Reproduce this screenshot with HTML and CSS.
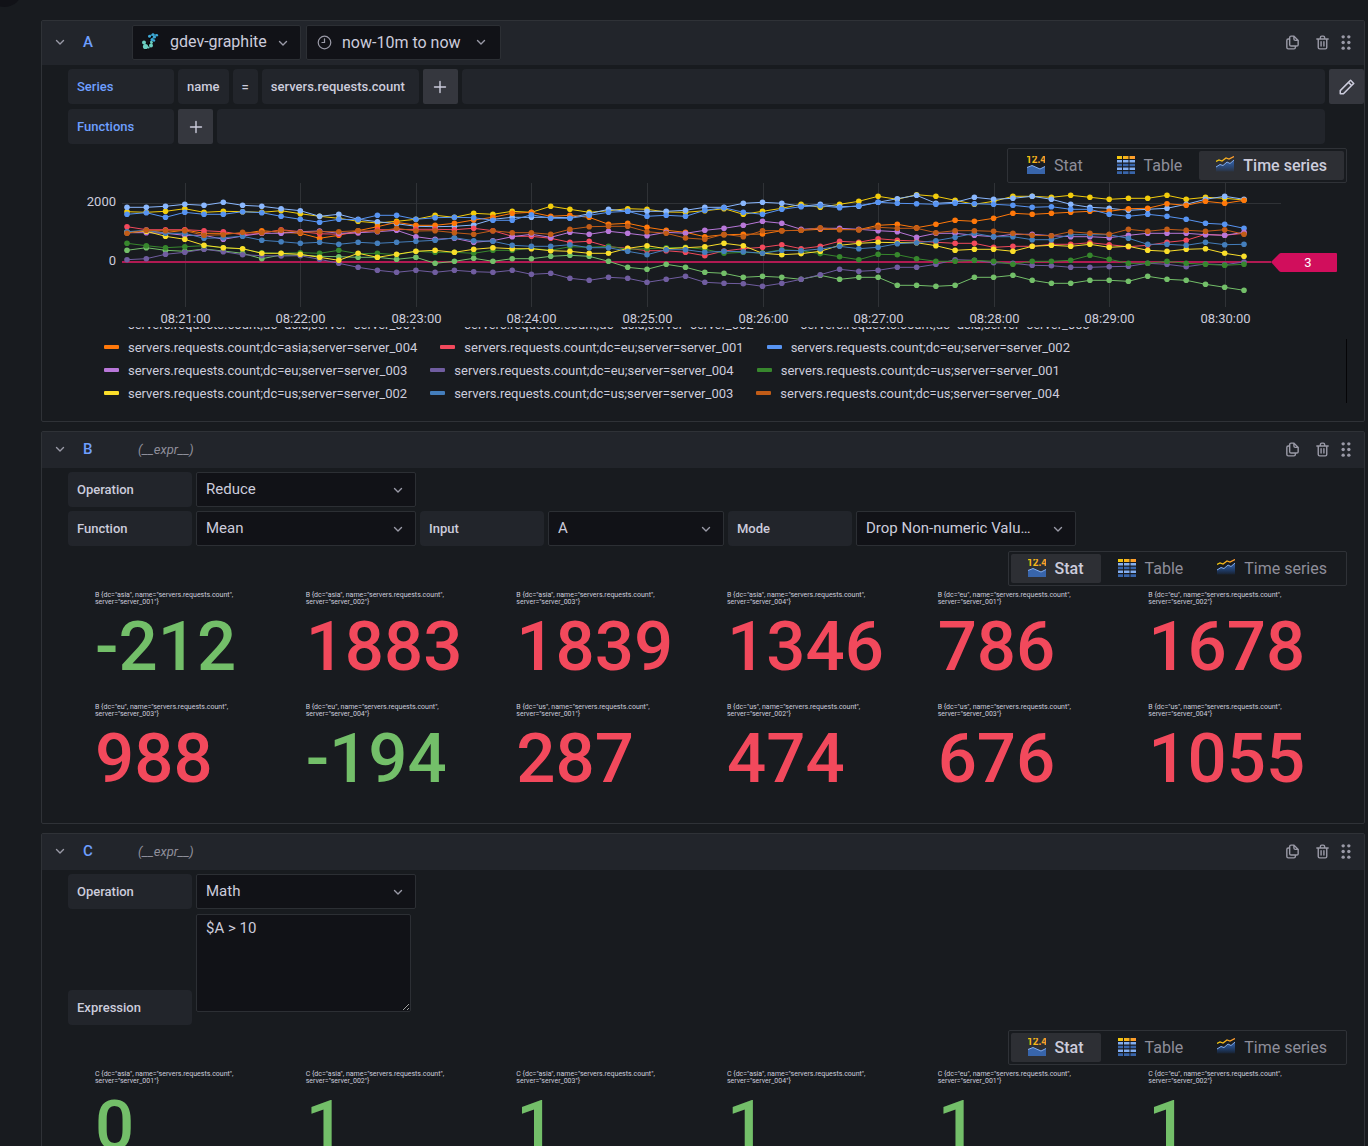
FILE: index.html
```
<!DOCTYPE html>
<html lang="en">
<head>
    <meta charset="utf-8">
    <title>Query editor</title>
    <link rel="stylesheet" href="styles.css">
</head>
<body>
    <svg class="sprite" aria-hidden="true">
        <defs>
            <linearGradient id="warm" x1="0" x2="1" y1="0" y2="0">
                <stop offset="0" stop-color="#f2cc0c"/>
                <stop offset="1" stop-color="#ff9830"/>
            </linearGradient>
            <linearGradient id="cold" x1="0" x2="0" y1="0" y2="1">
                <stop offset="0" stop-color="#3865ab"/>
                <stop offset="1" stop-color="#1f60c4" stop-opacity="0.1"/>
            </linearGradient>
        </defs>
        <symbol id="chevron" viewBox="0 0 12 12">
            <path d="M2.5 4.5 6 8l3.5-3.5" fill="none" stroke="currentColor" stroke-width="1.4" stroke-linecap="round" stroke-linejoin="round"/>
        </symbol>
        <symbol id="copy" viewBox="0 0 24 24">
            <path d="M21 8.94a1.31 1.31 0 0 0-.06-.27v-.09a1.07 1.07 0 0 0-.19-.28l-6-6a1.07 1.07 0 0 0-.28-.19h-.09a.88.88 0 0 0-.33-.11H10a3 3 0 0 0-3 3v1H6a3 3 0 0 0-3 3v10a3 3 0 0 0 3 3h8a3 3 0 0 0 3-3v-1h1a3 3 0 0 0 3-3V9v-.06Zm-6-3.53L17.59 8H16a1 1 0 0 1-1-1ZM15 19a1 1 0 0 1-1 1H6a1 1 0 0 1-1-1V9a1 1 0 0 1 1-1h1v7a3 3 0 0 0 3 3h5Zm4-4a1 1 0 0 1-1 1h-8a1 1 0 0 1-1-1V5a1 1 0 0 1 1-1h3v3a3 3 0 0 0 3 3h3Z" fill="currentColor"/>
        </symbol>
        <symbol id="trash" viewBox="0 0 24 24">
            <path d="M10 18a1 1 0 0 0 1-1v-6a1 1 0 0 0-2 0v6a1 1 0 0 0 1 1ZM20 6h-4V5a3 3 0 0 0-3-3h-2a3 3 0 0 0-3 3v1H4a1 1 0 0 0 0 2h1v11a3 3 0 0 0 3 3h8a3 3 0 0 0 3-3V8h1a1 1 0 0 0 0-2ZM10 5a1 1 0 0 1 1-1h2a1 1 0 0 1 1 1v1h-4Zm7 14a1 1 0 0 1-1 1H8a1 1 0 0 1-1-1V8h10Zm-3-1a1 1 0 0 0 1-1v-6a1 1 0 0 0-2 0v6a1 1 0 0 0 1 1Z" fill="currentColor"/>
        </symbol>
        <symbol id="drag" viewBox="0 0 12 18">
            <g fill="currentColor">
                <circle cx="3" cy="3" r="1.8"/><circle cx="9" cy="3" r="1.8"/>
                <circle cx="3" cy="9" r="1.8"/><circle cx="9" cy="9" r="1.8"/>
                <circle cx="3" cy="15" r="1.8"/><circle cx="9" cy="15" r="1.8"/>
            </g>
        </symbol>
        <symbol id="plus" viewBox="0 0 14 14">
            <path d="M7 1.5v11M1.5 7h11" stroke="currentColor" stroke-width="1.4" stroke-linecap="round"/>
        </symbol>
        <symbol id="pen" viewBox="0 0 24 24">
            <path d="M22 7.24a1 1 0 0 0-.29-.71l-4.24-4.24a1 1 0 0 0-.71-.29 1 1 0 0 0-.71.29l-2.83 2.83L2.29 16.05a1 1 0 0 0-.29.71V21a1 1 0 0 0 1 1h4.24a1 1 0 0 0 .76-.29l10.87-10.93L21.71 8a1.19 1.19 0 0 0 .22-.33 1 1 0 0 0 0-.24.7.7 0 0 0 0-.14ZM6.83 20H4v-2.83l9.93-9.93 2.83 2.83ZM18.17 8.66l-2.83-2.83 1.42-1.41 2.82 2.82Z" fill="currentColor"/>
        </symbol>
        <symbol id="clock" viewBox="0 0 16 16">
            <circle cx="8" cy="8" r="6.7" fill="none" stroke="currentColor" stroke-width="1.3"/>
            <path d="M8 4v4H5.3" fill="none" stroke="currentColor" stroke-width="1.3" stroke-linecap="round"/>
        </symbol>
        <symbol id="graphite" viewBox="0 0 18 18">
            <path d="M3 10 5.5 14.5 9 11.5 11 7M8.5 3 11 6.5 15 2" fill="none" stroke="#050607" stroke-width="4"/>
            <path d="M8 3 11 2 16 2M13 2 11.5 7 9 9M3 10 4.500 14" fill="none" stroke="#2a7f9c" stroke-width="1.4"/>
            <g fill="#6ccfc0">
                <circle cx="3" cy="9.500" r="2"/><circle cx="4.500" cy="13.500" r="2.600"/>
                <circle cx="10" cy="12.500" r="2"/><circle cx="7.500" cy="14.500" r="1.100"/>
                <circle cx="10.500" cy="9.500" r="1.400"/>
            </g>
            <g fill="#3fa9d8">
                <circle cx="8.500" cy="3.200" r="1.500"/><circle cx="12" cy="1.600" r="1.400"/>
                <circle cx="13.500" cy="4" r="1.600"/><circle cx="11" cy="6.500" r="1.500"/>
                <circle cx="15.800" cy="2.200" r="1.300"/><circle cx="13" cy="7.500" r="1.200"/>
            </g>
        </symbol>
        <symbol id="stat" viewBox="0 0 18 18">
            <text x="9" y="7" text-anchor="middle" font-family="Roboto, sans-serif" font-weight="700" font-size="10" fill="url(#warm)">12.4</text>
            <path d="M0 11.500 5 9.500 13 13 18 10.500V18H0Z" fill="#3865ab"/>
            <path d="M0 11.500 5 9.500 13 13 18 10.500" fill="none" stroke="#84aff1"/>
        </symbol>
        <symbol id="table" viewBox="0 0 18 18">
            <path d="M0 0h18v3H0Z" fill="url(#warm)"/>
            <path d="M0 4h18v2.500H0ZM0 11.500h18v2.500H0Z" fill="#84aff1"/>
            <path d="M0 7.800h18v2.500H0ZM0 15.300h18V18H0Z" fill="#3865ab"/>
            <path d="M5.500 0v18M12 0v18" stroke="#181b1f" stroke-width="1"/>
        </symbol>
        <symbol id="series" viewBox="0 0 18 18">
            <path d="M0 11 4 8.500 7 9.500l4-3 3 1 4-3v11H0Z" fill="url(#cold)"/>
            <path d="M0 11 4 8.500 7 9.500l4-3.500 3 1.500 4-3.500" fill="none" stroke="#84aff1"/>
            <path d="M0 5.500 3 4l3 1 4-3 3 1 5-2.500" fill="none" stroke="url(#warm)" stroke-width="1.300"/>
        </symbol>
    </svg>

    <div class="corner"></div>
    <main class="queries">
        <section class="query">
            <header class="query-header tall">
                <button class="icon-button" aria-label="Collapse query A"><svg class="icon-chevron"><use href="#chevron"/></svg></button>
                <h2 class="ref-id">A</h2>
                <div class="picker datasource">
                    <svg class="picker-icon"><use href="#graphite"/></svg>
                    <select class="with-icon" aria-label="Data source"><option>gdev-graphite</option></select>
                    <svg class="picker-arrow"><use href="#chevron"/></svg>
                </div>
                <button class="time-range">
                    <svg class="icon-clock"><use href="#clock"/></svg>
                    <span>now-10m to now</span>
                    <svg class="icon-chevron"><use href="#chevron"/></svg>
                </button>
                <div class="actions">
                    <button class="icon-button" aria-label="Duplicate query"><svg class="icon-action"><use href="#copy"/></svg></button>
                    <button class="icon-button" aria-label="Remove query"><svg class="icon-action"><use href="#trash"/></svg></button>
                    <button class="icon-button" aria-label="Move query"><svg class="icon-drag"><use href="#drag"/></svg></button>
                </div>
            </header>
            <div class="query-body">
                <div class="row">
                    <span class="label keyword">Series</span>
                    <button class="segment">name</button>
                    <button class="segment">=</button>
                    <button class="segment value">servers.requests.count</button>
                    <button class="square" aria-label="Add tag"><svg class="icon-plus"><use href="#plus"/></svg></button>
                    <div class="filler"></div>
                    <button class="square" aria-label="Edit as text"><svg class="icon-pen"><use href="#pen"/></svg></button>
                </div>
                <div class="row functions">
                    <span class="label keyword">Functions</span>
                    <button class="square" aria-label="Add function"><svg class="icon-plus"><use href="#plus"/></svg></button>
                    <div class="filler"></div>
                </div>
                <div class="view-switch">
                    <input type="radio" name="view-a" id="a-stat"><label for="a-stat"><svg><use href="#stat"/></svg>Stat</label>
                    <input type="radio" name="view-a" id="a-table"><label for="a-table"><svg><use href="#table"/></svg>Table</label>
                    <input type="radio" name="view-a" id="a-series" checked><label for="a-series"><svg><use href="#series"/></svg>Time series</label>
                </div>
            </div>
            <svg class="chart" id="chart" role="img" aria-label="servers.requests.count over time"></svg>
            <div class="legend-box">
                <ul class="legend" id="legend"></ul>
                <span class="legend-thumb"></span>
            </div>
        </section>

        <section class="query">
            <header class="query-header">
                <button class="icon-button" aria-label="Collapse query B"><svg class="icon-chevron"><use href="#chevron"/></svg></button>
                <h2 class="ref-id">B</h2>
                <em class="source">(__expr__)</em>
                <div class="actions">
                    <button class="icon-button" aria-label="Duplicate query"><svg class="icon-action"><use href="#copy"/></svg></button>
                    <button class="icon-button" aria-label="Remove query"><svg class="icon-action"><use href="#trash"/></svg></button>
                    <button class="icon-button" aria-label="Move query"><svg class="icon-drag"><use href="#drag"/></svg></button>
                </div>
            </header>
            <div class="query-body">
                <div class="row">
                    <label class="label wide" for="b-operation">Operation</label>
                    <div class="picker">
                        <select id="b-operation"><option>Reduce</option></select>
                        <svg class="picker-arrow"><use href="#chevron"/></svg>
                    </div>
                </div>
                <div class="row">
                    <label class="label wide" for="b-function">Function</label>
                    <div class="picker">
                        <select id="b-function"><option>Mean</option></select>
                        <svg class="picker-arrow"><use href="#chevron"/></svg>
                    </div>
                    <label class="label wide" for="b-input">Input</label>
                    <div class="picker narrow">
                        <select id="b-input"><option>A</option></select>
                        <svg class="picker-arrow"><use href="#chevron"/></svg>
                    </div>
                    <label class="label wide" for="b-mode">Mode</label>
                    <div class="picker">
                        <select id="b-mode"><option>Drop Non-numeric Values</option></select>
                        <svg class="picker-arrow"><use href="#chevron"/></svg>
                    </div>
                </div>
                <div class="view-switch">
                    <input type="radio" name="view-b" id="b-stat" checked><label for="b-stat"><svg><use href="#stat"/></svg>Stat</label>
                    <input type="radio" name="view-b" id="b-table"><label for="b-table"><svg><use href="#table"/></svg>Table</label>
                    <input type="radio" name="view-b" id="b-series"><label for="b-series"><svg><use href="#series"/></svg>Time series</label>
                </div>
            </div>
            <div class="stats" id="stats-b"></div>
        </section>

        <section class="query">
            <header class="query-header">
                <button class="icon-button" aria-label="Collapse query C"><svg class="icon-chevron"><use href="#chevron"/></svg></button>
                <h2 class="ref-id">C</h2>
                <em class="source">(__expr__)</em>
                <div class="actions">
                    <button class="icon-button" aria-label="Duplicate query"><svg class="icon-action"><use href="#copy"/></svg></button>
                    <button class="icon-button" aria-label="Remove query"><svg class="icon-action"><use href="#trash"/></svg></button>
                    <button class="icon-button" aria-label="Move query"><svg class="icon-drag"><use href="#drag"/></svg></button>
                </div>
            </header>
            <div class="query-body">
                <div class="row">
                    <label class="label wide" for="c-operation">Operation</label>
                    <div class="picker">
                        <select id="c-operation"><option>Math</option></select>
                        <svg class="picker-arrow"><use href="#chevron"/></svg>
                    </div>
                </div>
                <div class="row expression">
                    <label class="label wide" for="c-expression">Expression</label>
                    <textarea id="c-expression">$A &gt; 10</textarea>
                </div>
                <div class="view-switch">
                    <input type="radio" name="view-c" id="c-stat" checked><label for="c-stat"><svg><use href="#stat"/></svg>Stat</label>
                    <input type="radio" name="view-c" id="c-table"><label for="c-table"><svg><use href="#table"/></svg>Table</label>
                    <input type="radio" name="view-c" id="c-series"><label for="c-series"><svg><use href="#series"/></svg>Time series</label>
                </div>
            </div>
            <div class="stats" id="stats-c"></div>
        </section>
    </main>
    <script src="script.js"></script>
</body>
</html>
```
FILE: styles.css
```
* {
    box-sizing: border-box;
}
body {
    margin: 0;
    height: 100vh;
    overflow: hidden;
    background: #181b1f;
    color: #ccccdc;
    font-family: Roboto, "Liberation Sans", sans-serif;
    font-size: 15px;
}
button, select, textarea {
    font: inherit;
    color: inherit;
}
button {
    padding: 0;
    border: none;
    background: none;
    cursor: pointer;
}
svg {
    display: block;
    flex: none;
}
.sprite {
    position: absolute;
    width: 0;
    height: 0;
}
.corner {
    position: absolute;
    top: -26px;
    left: -14px;
    width: 36px;
    height: 33px;
    border-radius: 50%;
    background: #111217;
}
.queries {
    display: flex;
    flex-direction: column;
    gap: 9px;
    padding: 20px 3px 0 41px;
}
.query {
    border: 1px solid #2f3237;
    border-radius: 2px;
}
.query-header {
    display: flex;
    align-items: center;
    height: 36px;
    padding: 0 12px 2px;
    background: #22252b;
}
.query-header.tall {
    height: 44px;
}
.ref-id {
    width: 49px;
    margin: 0 0 0 17px;
    font-size: 15px;
    font-weight: 500;
    color: #6e9fff;
}
.source {
    padding-left: 6px;
    font-size: 13px;
    color: #8e8e9a;
}
.actions {
    display: flex;
    align-items: center;
    gap: 13px;
    margin-left: auto;
}
.actions .icon-button:last-child {
    margin-left: -4px;
}
.icon-button {
    color: #9a9aa7;
}
.icon-chevron, .picker-arrow {
    width: 12px;
    height: 12px;
    color: #9a9aa7;
}
.icon-action {
    width: 17px;
    height: 17px;
}
.icon-drag {
    width: 12px;
    height: 17px;
}
.icon-clock {
    width: 15px;
    height: 15px;
    color: #9a9aa7;
}
.icon-plus {
    width: 14px;
    height: 14px;
}
.icon-pen {
    width: 18px;
    height: 18px;
}

/* form rows */
.query-body {
    display: flex;
    flex-direction: column;
    gap: 4px;
    padding: 4px 0 0 26px;
}
.row {
    display: flex;
    gap: 4px;
}
.functions {
    margin: 1px 39px -1px 0;
}
.label {
    display: flex;
    align-items: center;
    width: 106px;
    height: 35px;
    padding: 0 9px;
    border-radius: 4px;
    background: #22252b;
    font-size: 13px;
    font-weight: 500;
}
.label.wide {
    width: 124px;
}
.label.keyword {
    color: #6e9fff;
}
.segment {
    height: 35px;
    padding: 0 9px;
    border-radius: 4px;
    background: #22252b;
    font-size: 13px;
    font-weight: 500;
}
.segment.value {
    min-width: 157px;
    text-align: left;
}
.square {
    display: flex;
    align-items: center;
    justify-content: center;
    width: 35px;
    height: 35px;
    border-radius: 2px;
    background: #35373e;
}
.filler {
    flex: 1;
    border-radius: 4px;
    background: #22252b;
}
.picker {
    position: relative;
    width: 220px;
}
.picker.narrow {
    width: 176px;
}
.picker.datasource {
    width: 169px;
    margin-right: 5px;
    font-size: 16px;
}
.picker select {
    appearance: none;
    width: 100%;
    height: 35px;
    padding: 0 42px 2px 9px;
    border: 1px solid #2c2f34;
    border-radius: 2px;
    background: #111217;
    text-overflow: ellipsis;
}
.picker select.with-icon {
    padding-right: 24px;
    padding-left: 37px;
}
.picker-icon {
    position: absolute;
    top: 8px;
    left: 9px;
    width: 18px;
    height: 18px;
}
.picker-arrow {
    position: absolute;
    top: 12px;
    right: 12px;
    pointer-events: none;
}
.time-range {
    display: flex;
    align-items: center;
    width: 195px;
    height: 35px;
    padding: 0 13px 0 10px;
    border: 1px solid #2c2f34;
    border-radius: 2px;
    background: #111217;
    font-size: 16px;
}
.time-range span {
    flex: 1;
    padding-left: 10px;
    text-align: left;
}
.expression {
    align-items: flex-end;
    margin-top: 1px;
}
.expression textarea {
    width: 215px;
    height: 98px;
    margin-bottom: 13px;
    padding: 4px 9px;
    border: 1px solid #2c2f34;
    border-radius: 2px;
    background: #111217;
    line-height: 19px;
}

/* Stat / Table / Time series */
.view-switch {
    display: flex;
    align-self: flex-end;
    height: 35px;
    margin: 1px 17px 0 0;
    padding: 2px;
    border: 1px solid #2f3237;
    border-radius: 2px;
    font-size: 16px;
}
.view-switch input {
    position: absolute;
    opacity: 0;
    pointer-events: none;
}
.view-switch label {
    display: flex;
    align-items: center;
    gap: 9px;
    padding: 0 17px 1px;
    border-radius: 2px;
    color: #8e8e9a;
    cursor: pointer;
}
.view-switch svg {
    width: 18px;
    height: 18px;
}
.view-switch input:checked + label {
    background: #2d2f34;
    color: #ccccdc;
    font-weight: 500;
}

/* time series panel */
.chart {
    width: 100%;
    height: 144px;
    font-size: 13px;
}
.chart text {
    fill: #ccccdc;
}
.chart .grid {
    stroke: #2f3236;
}
.chart .threshold {
    stroke: #b01a52;
    stroke-width: 2;
}
.chart .flag {
    fill: #d10e5c;
}
.chart .flag-text {
    fill: #fff;
}
.chart polyline {
    fill: none;
    stroke-width: 1;
}
.legend-box {
    position: relative;
    margin: 0 17px 16px 62px;
}
.legend {
    display: flex;
    flex-wrap: wrap;
    height: 78px;
    margin: 0;
    padding: 0;
    overflow-y: auto;
    scrollbar-width: none;
    list-style: none;
    font-size: 13px;
    line-height: 23px;
}
.legend li {
    display: flex;
    align-items: center;
    gap: 9px;
    height: 23px;
    padding-right: 23px;
    white-space: nowrap;
}
.legend i {
    width: 15px;
    height: 4px;
    margin-bottom: 2px;
    border-radius: 1px;
}
.legend-thumb {
    position: absolute;
    top: 12px;
    right: 0;
    width: 1px;
    height: 64px;
    background: #050507;
}

/* stat panel */
.stats {
    display: grid;
    grid-template-columns: repeat(6, 1fr);
    row-gap: 22px;
    padding: 6px 5px 29px 53px;
}
.stat-title {
    width: 140px;
    height: 14px;
    margin-bottom: 6px;
    font-size: 7px;
    line-height: 7px;
}
.stat-value {
    font-size: 69px;
    font-weight: 500;
    line-height: 70px;
    color: #73bf69;
}
.stat-value.high {
    color: #f2495c;
}
```
FILE: script.js
```
// y: samples every 10s, in thirds of a pixel from the top of the plot
var series = [
    { dc: 'asia', server: 'server_001', color: '#73bf69', y: [211,203,211,214,207,213,220,236,225,225,229,230,232,232,238,232,250,244,235,244,236,236,229,226,229,244,262,268,253,262,277,280,292,289,292,298,286,298,292,292,316,316,319,316,292,292,286,301,310,310,301,301,304,289,298,301,313,322,331] },
    { dc: 'asia', server: 'server_002', color: '#f2cc0c', y: [95,97,94,86,97,94,95,97,92,101,109,115,124,129,124,118,106,112,100,103,94,97,79,88,97,92,86,88,96,97,92,86,103,94,85,73,82,73,64,49,58,44,49,61,73,64,49,49,52,46,52,58,55,55,46,58,52,55,60] },
    { dc: 'asia', server: 'server_003', color: '#8ab8ff', y: [82,82,79,73,76,67,76,79,86,92,109,103,118,125,131,139,140,139,135,118,112,112,112,113,101,88,94,94,94,91,82,82,70,67,70,79,73,80,79,67,56,46,70,67,52,58,55,49,58,73,82,85,91,88,85,73,58,49,58] },
    { dc: 'asia', server: 'server_004', color: '#ff780a', y: [157,152,158,150,160,160,161,152,157,160,175,166,152,140,127,136,136,130,120,112,100,97,109,106,112,133,130,142,151,157,170,164,163,162,152,151,148,148,149,136,133,143,133,121,124,115,100,103,100,97,94,94,86,85,71,76,64,70,61] },
    { dc: 'eu', server: 'server_001', color: '#f2495c', y: [140,149,149,149,152,155,164,160,149,155,161,163,158,149,149,148,148,149,145,152,169,169,175,187,184,200,205,212,212,217,227,213,206,202,194,206,199,184,187,176,181,183,187,190,190,202,199,199,193,193,188,194,200,196,187,181,163,166,160] },
    { dc: 'eu', server: 'server_002', color: '#5794f2', y: [103,98,112,97,103,103,95,98,109,118,127,118,119,106,106,118,113,112,113,121,121,104,115,115,106,97,94,109,106,109,91,83,97,103,88,80,77,83,77,67,70,71,73,70,71,73,76,82,80,88,88,103,109,103,109,118,130,133,145] },
    { dc: 'eu', server: 'server_003', color: '#b877d9', y: [158,158,160,166,166,178,168,160,160,155,153,160,158,155,151,170,178,175,187,182,170,163,172,157,163,154,160,167,157,160,151,145,136,124,130,148,145,145,148,152,155,172,160,160,166,170,163,163,167,170,170,173,166,160,160,160,164,166,157] },
    { dc: 'eu', server: 'server_004', color: '#705da0', y: [239,236,223,217,208,215,224,227,228,227,238,250,262,271,277,271,277,271,275,277,271,283,280,295,301,292,295,307,298,289,307,310,311,319,310,298,284,268,274,271,262,262,253,239,241,248,250,256,257,262,262,260,259,250,253,260,252,254,246] },
    { dc: 'us', server: 'server_001', color: '#37872d', y: [190,197,203,200,197,203,207,218,220,218,220,211,221,220,224,214,217,217,220,211,211,205,211,200,202,199,208,206,203,202,208,220,217,219,209,212,221,230,239,223,224,236,244,244,241,244,253,244,244,241,226,238,250,250,244,250,253,256,253] },
    { dc: 'us', server: 'server_002', color: '#fade2a', y: [157,154,169,178,196,203,206,220,220,223,232,241,220,232,223,214,211,217,208,203,206,206,212,214,220,220,205,197,206,203,200,190,197,220,224,221,214,196,190,187,188,188,197,211,208,208,214,199,196,199,193,202,199,211,214,208,206,220,229] },
    { dc: 'us', server: 'server_003', color: '#447ebc', y: [155,151,160,160,175,173,169,181,185,190,187,193,187,190,187,184,181,173,182,184,196,199,199,194,203,203,214,224,209,209,217,214,215,220,211,212,207,199,206,202,191,188,182,172,160,170,170,179,179,164,164,164,175,193,193,196,187,194,193] },
    { dc: 'us', server: 'server_004', color: '#c15c17', y: [160,151,152,152,166,164,157,158,151,157,155,155,152,154,145,153,152,158,163,152,158,158,163,148,140,139,139,155,160,174,178,163,170,152,152,151,143,149,149,142,145,145,158,152,152,154,160,166,167,155,160,163,148,154,148,151,154,149,163] }
];

var means = [-212, 1883, 1839, 1346, 786, 1678, 988, -194, 287, 474, 676, 1055];
var above = [0, 1, 1, 1, 1, 1, 1, 0, 1, 1, 1, 1];

function drawChart() {
    var chart = document.getElementById('chart');
    var width = chart.clientWidth;
    var left = 85;
    var step = (width - 120 - left) / 58;
    var top = -3;
    var out = '';

    // grid and axis labels
    for (var m = 0; m < 10; m++) {
        var gx = Math.round(left + step * (3 + 6 * m)) + 0.5;
        out += '<line class="grid" x1="' + gx + '" x2="' + gx + '" y1="0" y2="124"/>';
        out += '<text x="' + gx + '" y="140" text-anchor="middle">08:' + (21 + m) + ':00</text>';
    }
    out += '<line class="grid" x1="80" x2="' + (width - 83) + '" y1="20.5" y2="20.5"/>';
    out += '<text x="74" y="23" text-anchor="end">2000</text>';
    out += '<text x="74" y="82" text-anchor="end">0</text>';

    // threshold line with its handle
    var fx = width - 93;
    out += '<line class="threshold" x1="80" x2="' + fx + '" y1="79" y2="79"/>';
    out += '<path class="flag" d="M' + fx + ' 79l8-8q1-1 2-1h55q1 0 1 1v17q0 1-1 1h-55q-1 0-2-1z"/>';
    out += '<text class="flag-text" x="' + (fx + 37) + '" y="84" text-anchor="middle">3</text>';

    series.forEach(function(s) {
        var points = s.y.map(function(y, i) {
            return [(left + step * i).toFixed(1), (y / 3 + top).toFixed(1)];
        });
        out += '<polyline stroke="' + s.color + '" points="' + points.join(' ') + '"/>';
        points.forEach(function(p) {
            out += '<circle cx="' + p[0] + '" cy="' + p[1] + '" r="2.8" fill="' + s.color + '"/>';
        });
    });
    chart.innerHTML = out;
}

function drawLegend() {
    var legend = document.getElementById('legend');
    legend.innerHTML = series.map(function(s) {
        return '<li><i style="background:' + s.color + '"></i>servers.requests.count;dc=' + s.dc + ';server=' + s.server + '</li>';
    }).join('');
    legend.scrollTop = legend.scrollHeight;
}

function drawStats(id, ref, values, limit) {
    document.getElementById(id).innerHTML = series.map(function(s, i) {
        return '<div><div class="stat-title">' + ref + ' {dc="' + s.dc + '", name="servers.requests.count", server="' + s.server + '"}</div>' +
            '<div class="stat-value' + (values[i] > limit ? ' high' : '') + '">' + values[i] + '</div></div>';
    }).join('');
}

drawChart();
drawLegend();
drawStats('stats-b', 'B', means, 80);
drawStats('stats-c', 'C', above, 80);
window.addEventListener('resize', drawChart);
```
